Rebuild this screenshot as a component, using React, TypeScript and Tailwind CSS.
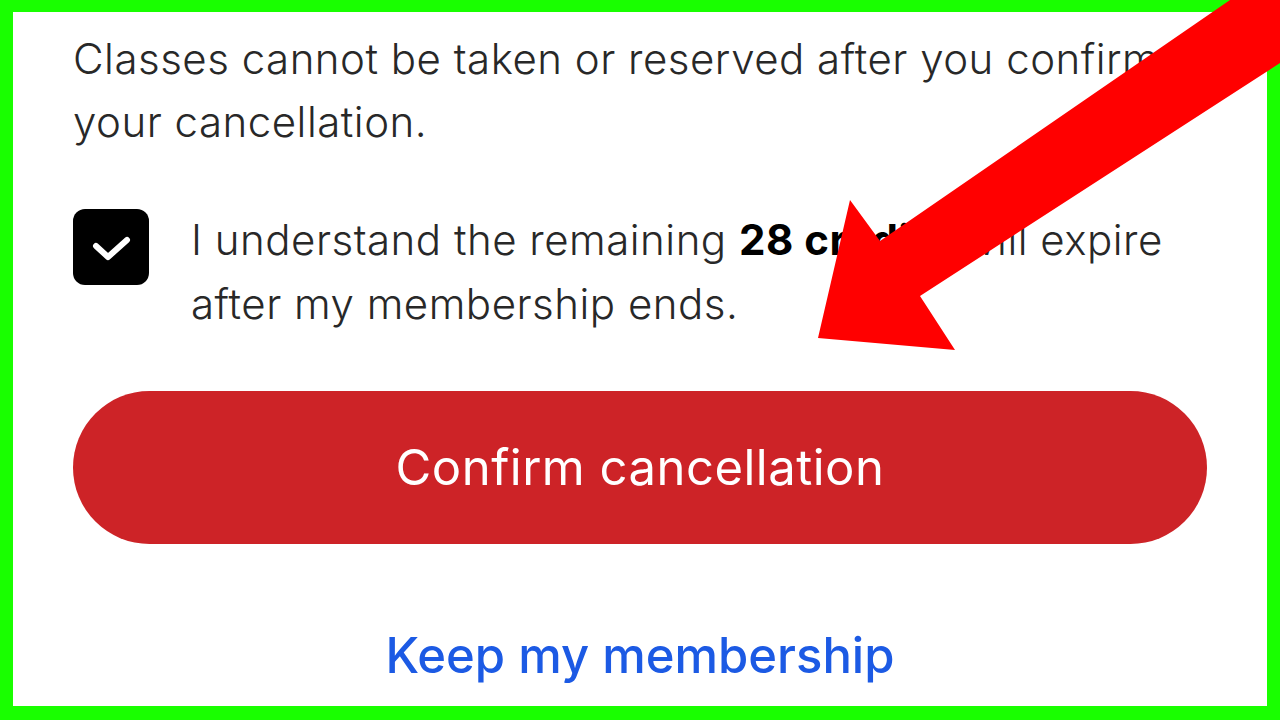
import React from 'react';

function CheckBox() {
  return (
    <div className="w-[76px] h-[76px] shrink-0 rounded-[12px] bg-black flex items-center justify-center mt-[1px]">
      <svg width="40" height="30" viewBox="0 0 40 30" fill="none">
        <path d="M5 14 L17 25 L36 8" stroke="white" strokeWidth="6" strokeLinecap="round" strokeLinejoin="round" />
      </svg>
    </div>
  );
}

function Arrow() {
  // big red pointer drawn over the screenshot
  return (
    <svg className="absolute inset-0 pointer-events-none" width="1280" height="720" viewBox="0 0 1280 720">
      <polygon
        points="1230,0 1280,0 1280,63 920,296 955,350 818,338 850,200 880,241"
        fill="#ff0000"
      />
    </svg>
  );
}

export default function App() {
  return (
    <div
      className="relative w-[1280px] h-[720px] bg-[#19ff00] pt-[12px] pl-[13px] pr-[13px] pb-[14px] overflow-hidden"
      style={{ fontFamily: 'Inter, "Noto Sans", sans-serif' }}
    >
      <div className="bg-white h-full px-[60px] pt-[15px] flex flex-col">
        <p className="text-[42px] leading-[63px] tracking-[0.012em] font-light text-[#282828]">
          Classes cannot be taken or reserved after you confirm
          <br />
          your cancellation.
        </p>

        <div className="flex items-start gap-[42px] mt-[55px]">
          <CheckBox />
          <p className="text-[42px] leading-[64px] tracking-[0.012em] font-light text-[#282828]">
            I understand the remaining <span className="font-bold text-black">28 credits</span> will expire
            <br />
            after my membership ends.
          </p>
        </div>

        <button className="mt-[55px] h-[153px] w-full rounded-full bg-[#cd2327] text-white text-[49px] tracking-[0.01em] font-normal flex items-center justify-center">
          Confirm cancellation
        </button>

        <div className="mt-[87px] flex justify-center">
          <span className="text-[49px] leading-[50px] font-medium text-[#1c5ae4]">Keep my membership</span>
        </div>
      </div>
      <Arrow />
    </div>
  );
}
